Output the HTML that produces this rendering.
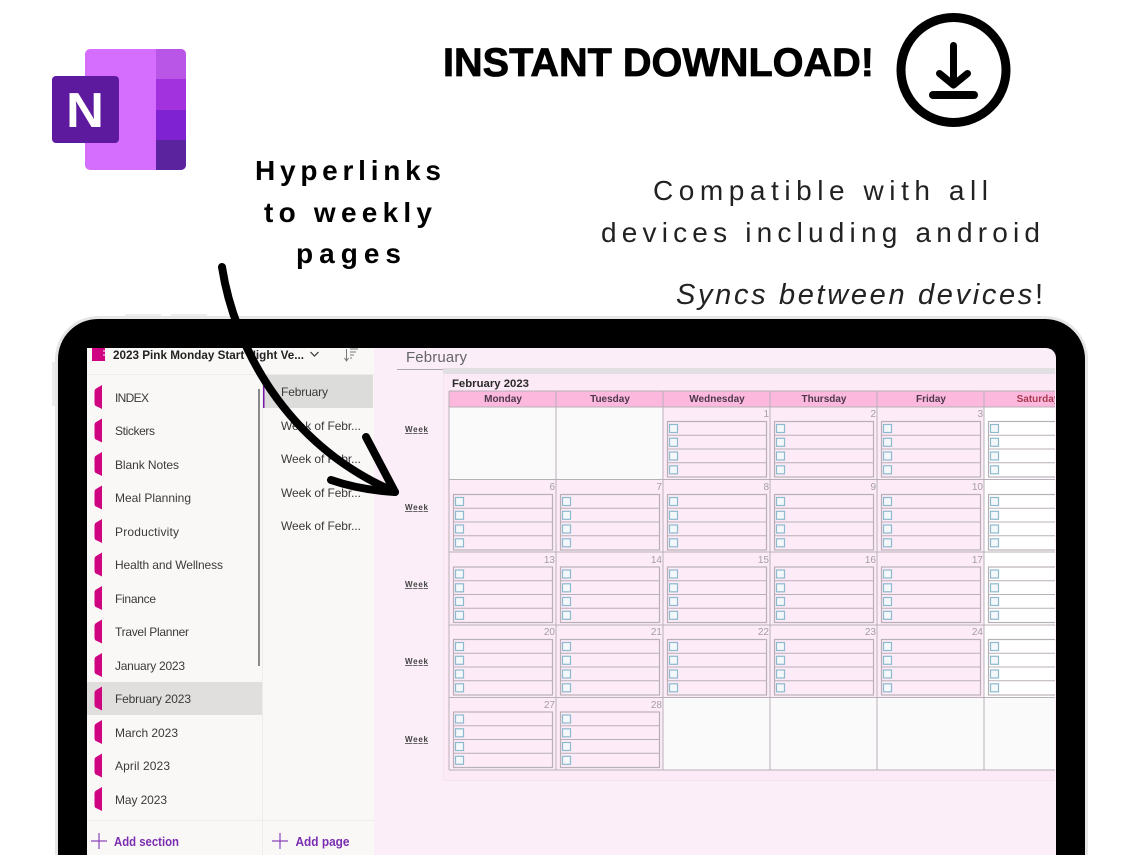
<!DOCTYPE html>
<html><head><meta charset="utf-8"><title>OneNote Planner</title>
<style>
html,body{margin:0;padding:0;background:#fff;width:1140px;height:855px;overflow:hidden}
svg{display:block}
text{font-family:"Liberation Sans",sans-serif}
.sec{font-size:12px;fill:#3a3a3a}
.day{font-size:10px;fill:#a3a0a3;text-anchor:end}
.hd{font-size:10px;fill:#4a384a;text-anchor:middle;font-weight:bold}
.wk{font-size:8px;fill:#444;font-weight:bold;text-decoration:underline}
</style></head><body>
<svg width="1140" height="855" viewBox="0 0 1140 855" xmlns="http://www.w3.org/2000/svg">
<defs>
<clipPath id="scr"><path d="M87 855V348H1046a10 10 0 0 1 10 10V855Z"/></clipPath>
<clipPath id="cal"><rect x="440" y="360" width="615" height="430"/></clipPath>
<g id="tab"><path d="M102 385V409L97 406.500Q94.500 406 94.500 403V391.500Q94.500 389 97 388Z" fill="#cf0480"/></g>
<g id="blk" fill="none">
<rect x=".5" y=".5" width="99" height="55.500" stroke="#b8b0b8" stroke-width="1.200"/>
<path d="M0 14.200H100M0 28H100M0 41.800H100" stroke="#b8b0b8" stroke-width="1"/>
<rect x="2.500" y="3.500" width="8" height="8" fill="#f4f8fb" stroke="#8dbace" stroke-width="1.200"/>
<rect x="2.500" y="17.300" width="8" height="8" fill="#f4f8fb" stroke="#8dbace" stroke-width="1.200"/>
<rect x="2.500" y="31" width="8" height="8" fill="#f4f8fb" stroke="#8dbace" stroke-width="1.200"/>
<rect x="2.500" y="44.800" width="8" height="8" fill="#f4f8fb" stroke="#8dbace" stroke-width="1.200"/>
</g>
</defs>

<!-- OneNote logo -->
<rect x="85" y="49" width="101" height="121" rx="5" fill="#d56eff"/>
<path d="M156 49h25a5 5 0 0 1 5 5v25h-30Z" fill="#b956e8"/>
<rect x="156" y="79" width="30" height="31" fill="#a232de"/>
<rect x="156" y="110" width="30" height="30" fill="#7f22d2"/>
<path d="M156 140h30v25a5 5 0 0 1-5 5h-25Z" fill="#5c239f"/>
<rect x="52" y="76" width="67" height="67" rx="4" fill="#5e1a9e"/>
<text x="66" y="127" font-size="49" font-weight="bold" fill="#fff" textLength="38" lengthAdjust="spacingAndGlyphs">N</text>

<!-- Headline -->
<text x="443" y="76" font-size="40" font-weight="bold" fill="#000" textLength="431" lengthAdjust="spacingAndGlyphs" stroke="#000" stroke-width=".8">INSTANT DOWNLOAD!</text>
<circle cx="953.500" cy="70" r="52.500" fill="none" stroke="#000" stroke-width="9"/>
<path d="M953.500 45.500V84M939.500 73.500L953.500 85L967.500 73.500" fill="none" stroke="#000" stroke-width="7" stroke-linecap="round" stroke-linejoin="round"/>
<path d="M933 95H974" fill="none" stroke="#000" stroke-width="8" stroke-linecap="round"/>

<text x="255" y="180" font-size="28" font-weight="bold" fill="#000" textLength="186">Hyperlinks</text>
<text x="264" y="222" font-size="28" font-weight="bold" fill="#000" textLength="168">to weekly</text>
<text x="296" y="263" font-size="28" font-weight="bold" fill="#000" textLength="105">pages</text>

<text x="653" y="200" font-size="28" fill="#222" textLength="335">Compatible with all</text>
<text x="601" y="242" font-size="28" fill="#222" textLength="439">devices including android</text>
<text x="676" y="304" font-size="29" font-style="italic" fill="#222" textLength="367">Syncs between devices<tspan font-style="normal">!</tspan></text>

<!-- Tablet -->
<rect x="125" y="314" width="36" height="6" fill="#eeeeee"/>
<rect x="171" y="314" width="36" height="6" fill="#eeeeee"/>
<rect x="52" y="362" width="5" height="44" fill="#ececec"/>
<path d="M55 855V359a43 43 0 0 1 43-43H1045a43 43 0 0 1 43 43V855Z" fill="#e6e6e6"/>
<path d="M58 855V359a40 40 0 0 1 40-40H1045a40 40 0 0 1 40 40V855Z" fill="#000"/>

<g clip-path="url(#scr)">
<rect x="87" y="348" width="287" height="507" fill="#faf8f7"/>
<rect x="374" y="348" width="682" height="507" fill="#fbeef8"/>
<rect x="87" y="374" width="287" height="1" fill="#eeecea"/>
<rect x="262" y="375" width="1" height="480" fill="#eeecea"/>
<rect x="87" y="820" width="287" height="1" fill="#eeecea"/>

<!-- Notebook header -->
<path d="M92 348h13v13h-13Z" fill="#cf0480"/>
<path d="M104 350v2M104 354v2" stroke="#fff" stroke-width="1"/>
<text x="113" y="359" font-size="12" font-weight="bold" fill="#222" textLength="191" lengthAdjust="spacingAndGlyphs">2023 Pink Monday Start Night Ve...</text>
<path d="M310.500 352L314.500 356L318.500 352" fill="none" stroke="#333" stroke-width="1.200"/>
<path d="M346.500 349V360M344.500 358L346.500 361L348.500 358M350 349H358M350 352H356M350 355H354M350 358H352" fill="none" stroke="#777" stroke-width="1"/>

<!-- Sections -->
<rect x="87" y="682" width="175" height="33" fill="#e0dfde"/>
<rect x="258" y="389" width="2" height="277" fill="#8a8a8a"/>
<use href="#tab"/><use href="#tab" y="33.500"/><use href="#tab" y="67"/><use href="#tab" y="100.500"/><use href="#tab" y="134"/><use href="#tab" y="167.500"/><use href="#tab" y="201"/><use href="#tab" y="234.500"/><use href="#tab" y="268"/><use href="#tab" y="301.500"/><use href="#tab" y="335"/><use href="#tab" y="368.500"/><use href="#tab" y="402"/>
<text class="sec" x="115" y="402" textLength="34">INDEX</text>
<text class="sec" x="115" y="435" textLength="40">Stickers</text>
<text class="sec" x="115" y="469" textLength="64">Blank Notes</text>
<text class="sec" x="115" y="502" textLength="76">Meal Planning</text>
<text class="sec" x="115" y="536" textLength="64">Productivity</text>
<text class="sec" x="115" y="569" textLength="108">Health and Wellness</text>
<text class="sec" x="115" y="603" textLength="41">Finance</text>
<text class="sec" x="115" y="636" textLength="74">Travel Planner</text>
<text class="sec" x="115" y="670" textLength="70">January 2023</text>
<text class="sec" x="115" y="703" textLength="76">February 2023</text>
<text class="sec" x="115" y="737" textLength="63">March 2023</text>
<text class="sec" x="115" y="770" textLength="55">April 2023</text>
<text class="sec" x="115" y="804" textLength="52">May 2023</text>

<!-- Pages -->
<rect x="263" y="375" width="110" height="33" fill="#dcdcdb"/>
<rect x="263" y="375" width="1.500" height="33" fill="#7719aa"/>
<text class="sec" x="281" y="396" textLength="47">February</text>
<text class="sec" x="281" y="430" textLength="80">Week of Febr...</text>
<text class="sec" x="281" y="463" textLength="80">Week of Febr...</text>
<text class="sec" x="281" y="497" textLength="80">Week of Febr...</text>
<text class="sec" x="281" y="530" textLength="80">Week of Febr...</text>

<path d="M91 841H107M99 833V849M272 841H288M280 833V849" stroke="#8a45bb" stroke-width="1.200"/>
<text x="114" y="846" font-size="12.500" font-weight="bold" fill="#7a2db0" textLength="65" lengthAdjust="spacingAndGlyphs">Add section</text>
<text x="295.500" y="846" font-size="12.500" font-weight="bold" fill="#7a2db0" textLength="54" lengthAdjust="spacingAndGlyphs">Add page</text>

<!-- Page title -->
<text x="406" y="362" font-size="15" fill="#666" textLength="61">February</text>
<rect x="397" y="369" width="186" height="1" fill="#aaa8aa"/>

<text class="wk" x="405" y="432" textLength="23">Week</text>
<text class="wk" x="405" y="510" textLength="23">Week</text>
<text class="wk" x="405" y="587" textLength="23">Week</text>
<text class="wk" x="405" y="664" textLength="23">Week</text>
<text class="wk" x="405" y="742" textLength="23">Week</text>

<!-- Calendar -->
<g clip-path="url(#cal)">
<rect x="443" y="368" width="613" height="413" fill="#fceaf6"/>
<rect x="443" y="368" width="613" height="6" fill="#e1dfe1"/>
<rect x="443" y="374" width="1" height="407" fill="#f3e4ef"/>
<rect x="443" y="780" width="613" height="1" fill="#f3e4ef"/>
<text x="452" y="387" font-size="11" font-weight="bold" fill="#2a2a2a" textLength="77" lengthAdjust="spacingAndGlyphs">February 2023</text>

<rect x="449" y="391" width="607" height="16" fill="#fdb9dd"/>
<text class="hd" x="503" y="402">Monday</text>
<text class="hd" x="610" y="402">Tuesday</text>
<text class="hd" x="717" y="402">Wednesday</text>
<text class="hd" x="824" y="402">Thursday</text>
<text class="hd" x="931" y="402">Friday</text>
<text class="hd" x="1038" y="402" style="fill:#a83a50">Saturday</text>

<!-- cell fills -->
<rect x="449" y="407" width="214" height="72.500" fill="#fafafa"/>
<rect x="663" y="407" width="321" height="72.500" fill="#fdebf7"/>
<rect x="449" y="479.500" width="535" height="218" fill="#fdebf7"/>
<rect x="449" y="697.500" width="214" height="72.500" fill="#fdebf7"/>
<rect x="663" y="697.500" width="393" height="72.500" fill="#fbfafb"/>
<rect x="984" y="407" width="72" height="290.500" fill="#fff"/>

<!-- blocks -->
<use href="#blk" x="667" y="421"/><use href="#blk" x="774" y="421"/><use href="#blk" x="881" y="421"/><use href="#blk" x="988" y="421"/>
<use href="#blk" x="453" y="494"/><use href="#blk" x="560" y="494"/><use href="#blk" x="667" y="494"/><use href="#blk" x="774" y="494"/><use href="#blk" x="881" y="494"/><use href="#blk" x="988" y="494"/>
<use href="#blk" x="453" y="566.500"/><use href="#blk" x="560" y="566.500"/><use href="#blk" x="667" y="566.500"/><use href="#blk" x="774" y="566.500"/><use href="#blk" x="881" y="566.500"/><use href="#blk" x="988" y="566.500"/>
<use href="#blk" x="453" y="639"/><use href="#blk" x="560" y="639"/><use href="#blk" x="667" y="639"/><use href="#blk" x="774" y="639"/><use href="#blk" x="881" y="639"/><use href="#blk" x="988" y="639"/>
<use href="#blk" x="453" y="711.500"/><use href="#blk" x="560" y="711.500"/>

<!-- grid -->
<path d="M449 391H1056M449 407H1056M449 479.500H1056M449 552H1056M449 625H1056M449 697.500H1056M449 770H1056M449 391V770M556 391V770M663 391V770M770 391V770M877 391V770M984 391V770" fill="none" stroke="#b8b0b8" stroke-width="1"/>

<!-- numbers -->
<text class="day" x="769" y="417">1</text><text class="day" x="876" y="417">2</text><text class="day" x="983" y="417">3</text>
<text class="day" x="555" y="490">6</text><text class="day" x="662" y="490">7</text><text class="day" x="769" y="490">8</text><text class="day" x="876" y="490">9</text><text class="day" x="983" y="490">10</text>
<text class="day" x="555" y="563">13</text><text class="day" x="662" y="563">14</text><text class="day" x="769" y="563">15</text><text class="day" x="876" y="563">16</text><text class="day" x="983" y="563">17</text>
<text class="day" x="555" y="635">20</text><text class="day" x="662" y="635">21</text><text class="day" x="769" y="635">22</text><text class="day" x="876" y="635">23</text><text class="day" x="983" y="635">24</text>
<text class="day" x="555" y="708">27</text><text class="day" x="662" y="708">28</text>
</g>
</g>

<!-- Arrow -->
<path d="M222 267C234 345 285 445 395 492" fill="none" stroke="#000" stroke-width="8" stroke-linecap="round"/>
<path d="M331 480Q360 490 395 492L366 437" fill="none" stroke="#000" stroke-width="8" stroke-linecap="round" stroke-linejoin="round"/>
</svg>
</body></html>
